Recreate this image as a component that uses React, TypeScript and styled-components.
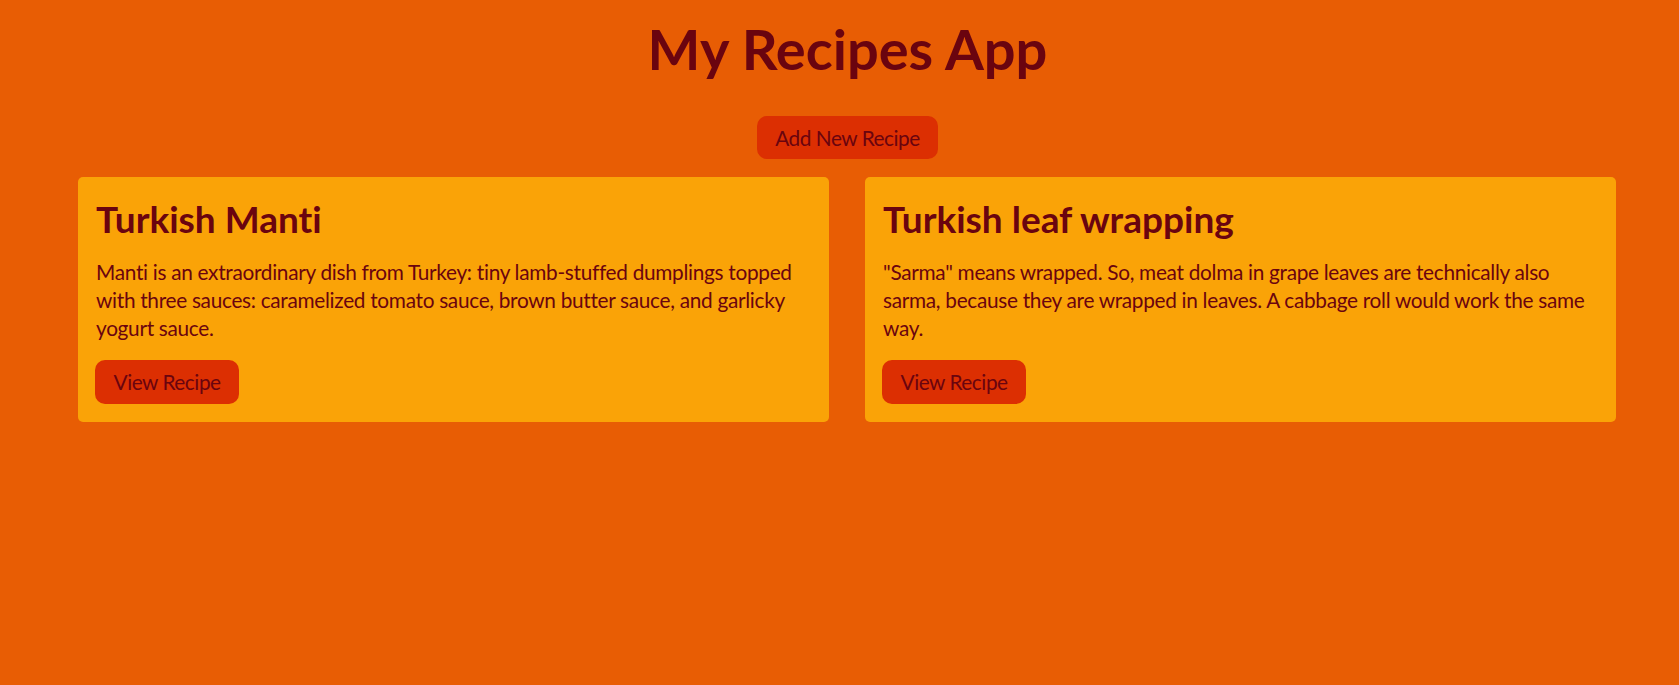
import React from "react";
import styled, { createGlobalStyle } from "styled-components";

const GlobalStyle = createGlobalStyle`
  html, body {
    margin: 0;
    padding: 0;
    background: #e85d04;
  }
  body {
    font-family: Lato, "Open Sans", sans-serif;
    font-variant-ligatures: none;
    color: #6a040f;
  }
  * { box-sizing: border-box; }
`;

const Page = styled.div`
  min-height: 685px;
  padding: 0 0 0 16px;
  display: flex;
  flex-direction: column;
  align-items: center;
`;

const Title = styled.h1`
  margin: 15px 0 0;
  font-size: 56px;
  font-weight: 700;
  line-height: 67px;
  color: #6a040f;
`;

const Button = styled.button<{ $top?: number }>`
  margin-top: ${(p) => p.$top ?? 0}px;
  font-family: inherit;
  font-variant-ligatures: none;
  font-size: 20.8px;
  line-height: 27.7px;
  letter-spacing: -0.45px;
  padding: 7.8px 18.5px;
  border: none;
  border-radius: 10px;
  background: #dc2f02;
  color: #6a040f;
  cursor: pointer;
`;

const Grid = styled.div`
  align-self: stretch;
  display: grid;
  grid-template-columns: 1fr 1fr;
  align-items: start;
  gap: 36px;
  padding: 0 63px 0 62px;
  margin-top: 18px;
`;

const Card = styled.article`
  background: #faa307;
  border-radius: 5px;
  padding: 20px 17px 18px;
`;

const CardTitle = styled.h2`
  margin: 0 0 0 1px;
  font-size: 37px;
  font-weight: 700;
  line-height: 44px;
  color: #6a040f;
`;

const CardText = styled.p`
  margin: 17px 0 19px 1px;
  font-size: 20.8px;
  line-height: 27.7px;
  letter-spacing: -0.3px;
  color: #6a040f;
`;

const recipes = [
  {
    title: "Turkish Manti",
    text: "Manti is an extraordinary dish from Turkey: tiny lamb-stuffed dumplings topped with three sauces: caramelized tomato sauce, brown butter sauce, and garlicky yogurt sauce.",
  },
  {
    title: "Turkish leaf wrapping",
    text: "\"Sarma\" means wrapped. So, meat dolma in grape leaves are technically also sarma, because they are wrapped in leaves. A cabbage roll would work the same way.",
  },
];

export default function App() {
  return (
    <>
      <GlobalStyle />
      <Page>
        <Title>My Recipes App</Title>
        <Button $top={34}>Add New Recipe</Button>
        <Grid>
          {recipes.map((r) => (
            <Card key={r.title}>
              <CardTitle>{r.title}</CardTitle>
              <CardText>{r.text}</CardText>
              <Button>View Recipe</Button>
            </Card>
          ))}
        </Grid>
      </Page>
    </>
  );
}
